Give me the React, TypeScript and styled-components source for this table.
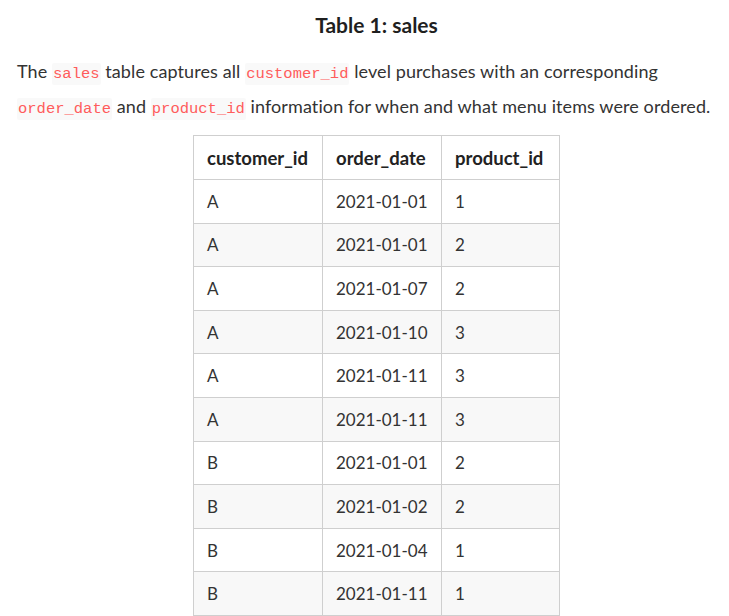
import React from 'react'
import styled, { createGlobalStyle } from 'styled-components'

const GlobalStyle = createGlobalStyle`
  html, body {
    margin: 0;
    padding: 0;
    background: #fff;
    overflow: hidden;
  }
`

const Page = styled.div`
  width: 719px;
  padding: 0 0 0 17px;
  font-family: Lato, "Noto Sans", sans-serif;
  font-size: 18px;
  color: #333;
`

const Title = styled.h3`
  margin: 0;
  padding-top: 13px;
  height: 24px;
  line-height: 24px;
  text-align: center;
  font-size: 21px;
  font-weight: 700;
  color: #1f1f1f;
`

const Para = styled.p`
  margin: 18px 0 0;
  line-height: 32px;
  letter-spacing: 0.1px;
`

const Code = styled.code`
  font-family: "Liberation Mono", monospace;
  font-size: 15.5px;
  letter-spacing: 0;
  color: #ff5c5c;
  background: #f9f9f9;
  padding: 2px 1px;
  border-radius: 2px;
`

const TableWrap = styled.div`
  display: flex;
  justify-content: center;
  margin-top: 10px;
`

const Table = styled.table`
  border-collapse: collapse;
  table-layout: fixed;
  white-space: nowrap;
`

const Head = styled.th<{ $w: number }>`
  width: ${p => p.$w}px;
  box-sizing: border-box;
  height: 44px;
  padding: 0 13px;
  text-align: left;
  font-size: 18.5px;
  font-weight: 700;
  color: #222;
  border: 1px solid #cfcfcf;
`

const Row = styled.tr<{ $alt: boolean }>`
  background: ${p => (p.$alt ? '#f8f8f8' : '#fff')};
`

const Cell = styled.td`
  height: 42.6px;
  padding: 0 13px;
  font-size: 17px;
  border: 1px solid #cfcfcf;
`

const rows = [
  ['A', '2021-01-01', '1'],
  ['A', '2021-01-01', '2'],
  ['A', '2021-01-07', '2'],
  ['A', '2021-01-10', '3'],
  ['A', '2021-01-11', '3'],
  ['A', '2021-01-11', '3'],
  ['B', '2021-01-01', '2'],
  ['B', '2021-01-02', '2'],
  ['B', '2021-01-04', '1'],
  ['B', '2021-01-11', '1'],
]

const App = () => {
  return (
    <Page>
      <GlobalStyle />
      <Title>Table 1: sales</Title>
      <Para>
        The <Code>sales</Code> table captures all <Code>customer_id</Code> level purchases with an corresponding{' '}
        <Code>order_date</Code> and <Code>product_id</Code> information for when and what menu items were ordered.
      </Para>
      <TableWrap>
        <Table>
          <thead>
            <tr>
              <Head $w={129}>customer_id</Head>
              <Head $w={119}>order_date</Head>
              <Head $w={118}>product_id</Head>
            </tr>
          </thead>
          <tbody>
            {rows.map((r, i) => (
              <Row key={i} $alt={i % 2 === 1}>
                <Cell>{r[0]}</Cell>
                <Cell>{r[1]}</Cell>
                <Cell>{r[2]}</Cell>
              </Row>
            ))}
          </tbody>
        </Table>
      </TableWrap>
    </Page>
  )
}

export default App
